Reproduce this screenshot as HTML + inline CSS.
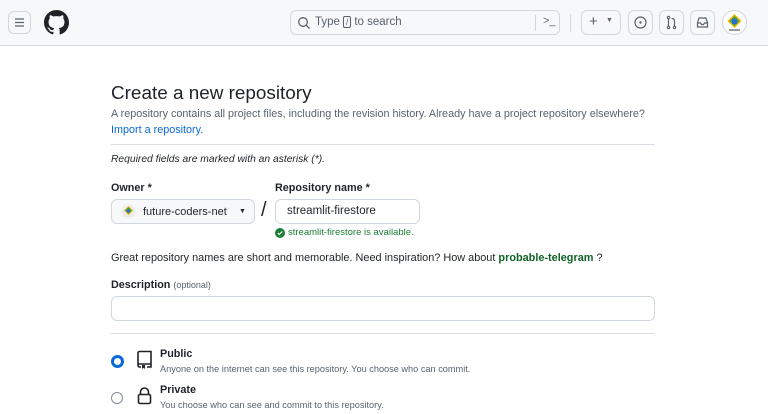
<!DOCTYPE html>
<html><head><meta charset="utf-8"><style>
*{box-sizing:border-box;margin:0;padding:0}
body{width:768px;height:414px;overflow:hidden;background:#fff;font-family:"Liberation Sans",sans-serif;color:#1f2328;position:relative}
.hdr{position:absolute;left:0;top:0;width:768px;height:46px;background:#f6f8fa;border-bottom:1px solid #d0d7de}
.btn{position:absolute;border:1px solid #d0d7de;border-radius:6px;background:#f6f8fa;height:24px}
.a{position:absolute;white-space:nowrap}
.s{font-size:9.2px;color:#59636e}
.b{font-weight:bold}
.inp{position:absolute;border:1px solid #d0d7de;border-radius:6px;background:#fff}
.hr{position:absolute;left:111px;width:544px;height:1px;background:#d8dee4}
</style></head><body>
<div class="hdr">
 <div class="btn" style="left:8px;top:11px;width:23px;height:23px"><svg width="21" height="21" viewBox="0 0 21 21"><path d="M6 7h9M6 10.5h9M6 14h9" stroke="#59636e" stroke-width="1.3"/></svg></div>
 <svg style="position:absolute;left:44px;top:10px" width="25" height="25" viewBox="0 0 16 16"><path fill="#1f2328" d="M8 0C3.58 0 0 3.58 0 8c0 3.540 2.29 6.53 5.47 7.59.4.07.55-.17.55-.38v-1.33c-2.23.48-2.7-1.07-2.7-1.07-.36-.92-.89-1.170-.89-1.17-.73-.5.06-.49.06-.49.8.06 1.23.83 1.23.83.71 1.22 1.87.87 2.33.66.07-.52.28-.87.5-1.07-1.78-.2-3.64-.89-3.640-3.95 0-.87.31-1.59.82-2.15-.08-.2-.36-1.02.08-2.12 0 0 .67-.21 2.2.82a7.6 7.6 0 0 1 4 0c1.53-1.04 2.2-.82 2.2-.82.44 1.1.16 1.92.08 2.12.51.56.82 1.27.82 2.15 0 3.07-1.87 3.75-3.65 3.95.29.25.54.73.54 1.48v2.2c0 .21.15.46.55.38A8.01 8.01 0 0 0 16 8c0-4.42-3.58-8-8-8z"/></svg>
 <div class="inp" style="left:290px;top:10px;width:270px;height:25px;background:#f6f8fa">
  <svg style="position:absolute;left:6px;top:5px" width="14" height="14" viewBox="0 0 14 14"><circle cx="6" cy="6" r="4.3" fill="none" stroke="#59636e" stroke-width="1.3"/><path d="M9.2 9.2l3.3 3.3" stroke="#59636e" stroke-width="1.3"/></svg>
  <span class="a" style="left:24px;top:5px;font-size:11.5px;color:#59636e">Type <span style="display:inline-block;border:1px solid #59636e;border-radius:2px;width:8px;height:12px;font-size:9px;line-height:10px;text-align:center">/</span> to search</span>
  <div class="a" style="left:244px;top:4px;width:1px;height:16px;background:#d0d7de"></div>
  <span class="a" style="left:252px;top:4px;font-size:11px;color:#59636e">&gt;_</span>
 </div>
 <div class="a" style="left:570px;top:14px;width:1px;height:18px;background:#d0d7de"></div>
 <div class="btn" style="left:581px;top:10px;width:40px;height:25px"><span class="a" style="left:7px;top:2px;font-size:15px;color:#59636e">+</span><span class="a" style="left:24px;top:6px;font-size:7px;color:#59636e">▼</span></div>
 <div class="btn" style="left:628px;top:10px;width:25px;height:25px"><svg width="23" height="23" viewBox="0 0 23 23"><circle cx="11.5" cy="11.5" r="5.5" fill="none" stroke="#59636e" stroke-width="1.2"/><circle cx="11.5" cy="11.5" r="1.2" fill="#59636e"/></svg></div>
 <div class="btn" style="left:659px;top:10px;width:25px;height:25px"><svg width="23" height="23" viewBox="0 0 23 23"><path d="M8.5 7v9M14.5 10v6M14.5 10c0-2-1-2.5-3-2.5" stroke="#59636e" stroke-width="1.2" fill="none"/><circle cx="8.5" cy="6.5" r="1.2" fill="none" stroke="#59636e"/><circle cx="8.5" cy="16.5" r="1.2" fill="none" stroke="#59636e"/><circle cx="14.5" cy="16.5" r="1.2" fill="none" stroke="#59636e"/></svg></div>
 <div class="btn" style="left:690px;top:10px;width:25px;height:25px"><svg width="23" height="23" viewBox="0 0 23 23"><path d="M6.5 12l1.5-5h7l1.5 5v4h-10zM6.5 12h3l1 1.5h2l1-1.5h3" stroke="#59636e" stroke-width="1.2" fill="none"/></svg></div>
 <div class="a" style="left:722px;top:10px;width:25px;height:25px;border-radius:50%;background:#fff;border:1px solid #d0d7de"><svg width="23" height="23" viewBox="0 0 23 23"><path d="M11.5 3l7 7-7 7-7-7z" fill="#f0b400"/><path d="M11.5 5l5 5-5 5-5-5z" fill="#3aa845"/><rect x="9" y="8" width="5" height="5" fill="#2a6fd6"/><rect x="6" y="18" width="11" height="2" fill="#999"/></svg></div>
</div>

<div class="a" style="left:111px;top:83px;font-size:18.9px">Create a new repository</div>
<div class="a" style="left:111px;top:108px;font-size:10.8px;color:#59636e">A repository contains all project files, including the revision history. Already have a project repository elsewhere?</div>
<div class="a" style="left:111px;top:124px;font-size:10.8px;color:#0969da">Import a repository.</div>
<div class="hr" style="top:144px"></div>
<div class="a" style="left:111px;top:154px;font-size:10.3px;font-style:italic;color:#1f2328">Required fields are marked with an asterisk (*).</div>
<div class="a b" style="left:111px;top:182px;font-size:10.8px">Owner *</div>
<div class="a b" style="left:275px;top:182px;font-size:10.8px">Repository name *</div>
<div class="btn" style="left:111px;top:199px;width:144px;height:25px">
 <svg style="position:absolute;left:9px;top:4px" width="15" height="15" viewBox="0 0 23 23"><circle cx="11.5" cy="11.5" r="11" fill="#eee"/><path d="M11.5 3l7 7-7 7-7-7z" fill="#f0b400"/><path d="M11.5 5l5 5-5 5-5-5z" fill="#3aa845"/><rect x="9" y="8" width="5" height="5" fill="#2a6fd6"/></svg>
 <span class="a" style="left:31px;top:6px;font-size:11px;color:#1f2328">future-coders-net</span>
 <span class="a" style="left:127px;top:8px;font-size:7px">▼</span>
</div>
<div class="a" style="left:261px;top:199px;font-size:20px;color:#1f2328">/</div>
<div class="inp" style="left:275px;top:199px;width:145px;height:25px"><span class="a" style="left:11px;top:5px;font-size:11.5px">streamlit-firestore</span></div>
<svg style="position:absolute;left:275px;top:228px" width="10" height="10" viewBox="0 0 10 10"><circle cx="5" cy="5" r="5" fill="#1a7f37"/><path d="M2.8 5.1l1.5 1.4 2.9-3" stroke="#fff" stroke-width="1.2" fill="none"/></svg>
<div class="a" style="left:288px;top:227px;font-size:9.5px;color:#1a7f37">streamlit-firestore is available.</div>
<div class="a" style="left:111px;top:252px;font-size:10.9px">Great repository names are short and memorable. Need inspiration? How about <span class="b" style="color:#116329">probable-telegram</span> ?</div>
<div class="a b" style="left:111px;top:279px;font-size:10.8px">Description <span style="font-size:9px;color:#59636e;font-weight:normal">(optional)</span></div>
<div class="inp" style="left:111px;top:296px;width:544px;height:25px"></div>
<div class="hr" style="top:333px"></div>
<div class="a" style="left:111px;top:355px;width:13px;height:13px;border-radius:50%;border:3.5px solid #0969da"></div>
<svg style="position:absolute;left:136px;top:350px" width="17" height="19" viewBox="0 0 17 19"><path d="M2 16V3a1.5 1.5 0 0 1 1.5-1.5H15V14H3.5A1.5 1.5 0 0 0 2 15.5 1.5 1.5 0 0 0 3.5 17H5M15 14v3H11" stroke="#1f2328" stroke-width="1.6" fill="none"/><path d="M6 15v4l1.5-1.2L9 19v-4z" fill="#1f2328"/></svg>
<div class="a b" style="left:160px;top:348px;font-size:10.8px">Public</div>
<div class="a s" style="left:160px;top:364px">Anyone on the internet can see this repository. You choose who can commit.</div>
<div class="a" style="left:111px;top:392px;width:12px;height:12px;border-radius:50%;border:1px solid #818b98"></div>
<svg style="position:absolute;left:136px;top:386px" width="17" height="20" viewBox="0 0 17 20"><path d="M4.5 8.5V6a4 4 0 0 1 8 0v2.5" stroke="#1f2328" stroke-width="1.6" fill="none"/><rect x="2.5" y="8.5" width="12" height="9" rx="1.5" stroke="#1f2328" stroke-width="1.6" fill="none"/></svg>
<div class="a b" style="left:160px;top:384px;font-size:10.8px">Private</div>
<div class="a s" style="left:160px;top:400px">You choose who can see and commit to this repository.</div>
</body></html>
